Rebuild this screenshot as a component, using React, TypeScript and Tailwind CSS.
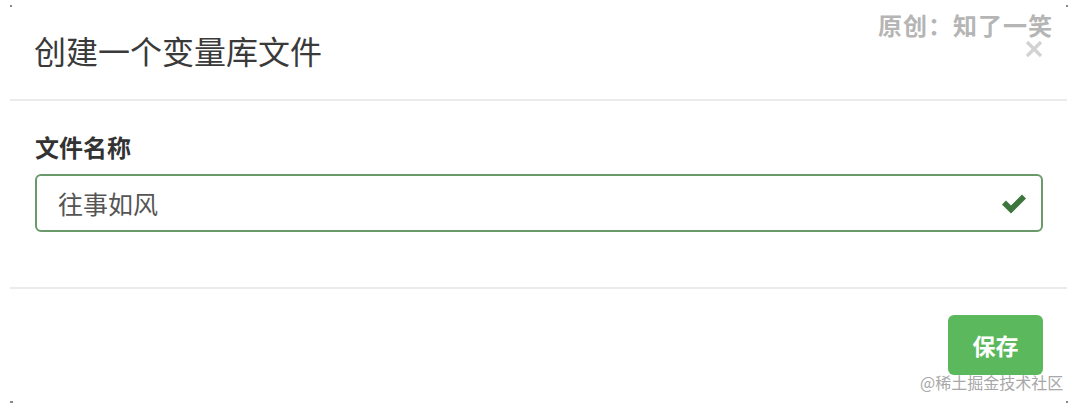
const cjk = { fontFamily: '"Noto Sans CJK SC", "Noto Sans", sans-serif' };

function CheckIcon() {
  return (
    <svg width="26" height="21" viewBox="0 0 26 21" className="shrink-0">
      <path
        d="M1 11.5 L5 7.5 L10 12.5 L21 1.5 L25 5.5 L10 20.5 Z"
        fill="#3c763d"
      />
    </svg>
  );
}

function CloseIcon() {
  return (
    <svg width="18" height="18" viewBox="0 0 18 18">
      <path
        d="M2 2 L16 16 M16 2 L2 16"
        stroke="#d2d2d2"
        strokeWidth="3.2"
        strokeLinecap="butt"
      />
    </svg>
  );
}

export default function App() {
  return (
    <div
      className="relative h-[407px] w-[1080px] overflow-hidden bg-white"
      style={cjk}
    >
      <div className="ml-[10px] flex w-[1057px] flex-col">
        <div className="flex h-[101px] items-center border-b-2 border-[#ebebeb] px-[24px]">
          <h1 className="text-[32px] leading-none font-normal text-[#3a3a3a]">
            创建一个变量库文件
          </h1>
        </div>

        <div className="flex flex-col pt-[31px] pr-[24px] pb-[55px] pl-[25px]">
          <label className="text-[24px] leading-[30px] font-bold text-[#333]">
            文件名称
          </label>
          <div className="mt-[12px] flex h-[58px] items-center justify-between rounded-[6px] border-2 border-[#6a9a6a] pr-[14px] pl-[21px]">
            <span className="text-[25px] leading-none text-[#555]">
              往事如风
            </span>
            <CheckIcon />
          </div>
        </div>

        <div className="flex justify-end border-t-2 border-[#ebebeb] pt-[26px] pr-[24px]">
          <button className="flex h-[60px] w-[95px] items-center justify-center rounded-[6px] bg-[#5cb85c] text-[23px] font-semibold text-white">
            保存
          </button>
        </div>
      </div>

      <span className="absolute top-[13px] left-[878px] text-[24px] leading-[24px] font-bold tracking-[1px] text-[#b5b5b5]">
        原创：知了一笑
      </span>
      <button className="absolute top-[40px] left-[1025px]">
        <CloseIcon />
      </button>
      <span className="absolute top-[372px] left-[920px] text-[16px] leading-[20px] text-[#a8a8a8]">
        @稀土掘金技术社区
      </span>

      <span className="absolute top-[5px] left-[10px] h-[2px] w-[2px] bg-[#888]" />
      <span className="absolute top-[5px] left-[1066px] h-[2px] w-[2px] bg-[#888]" />
      <span className="absolute top-[401px] left-[10px] h-[2px] w-[3px] bg-[#888]" />
      <span className="absolute top-[401px] left-[1066px] h-[2px] w-[2px] bg-[#888]" />
    </div>
  );
}
